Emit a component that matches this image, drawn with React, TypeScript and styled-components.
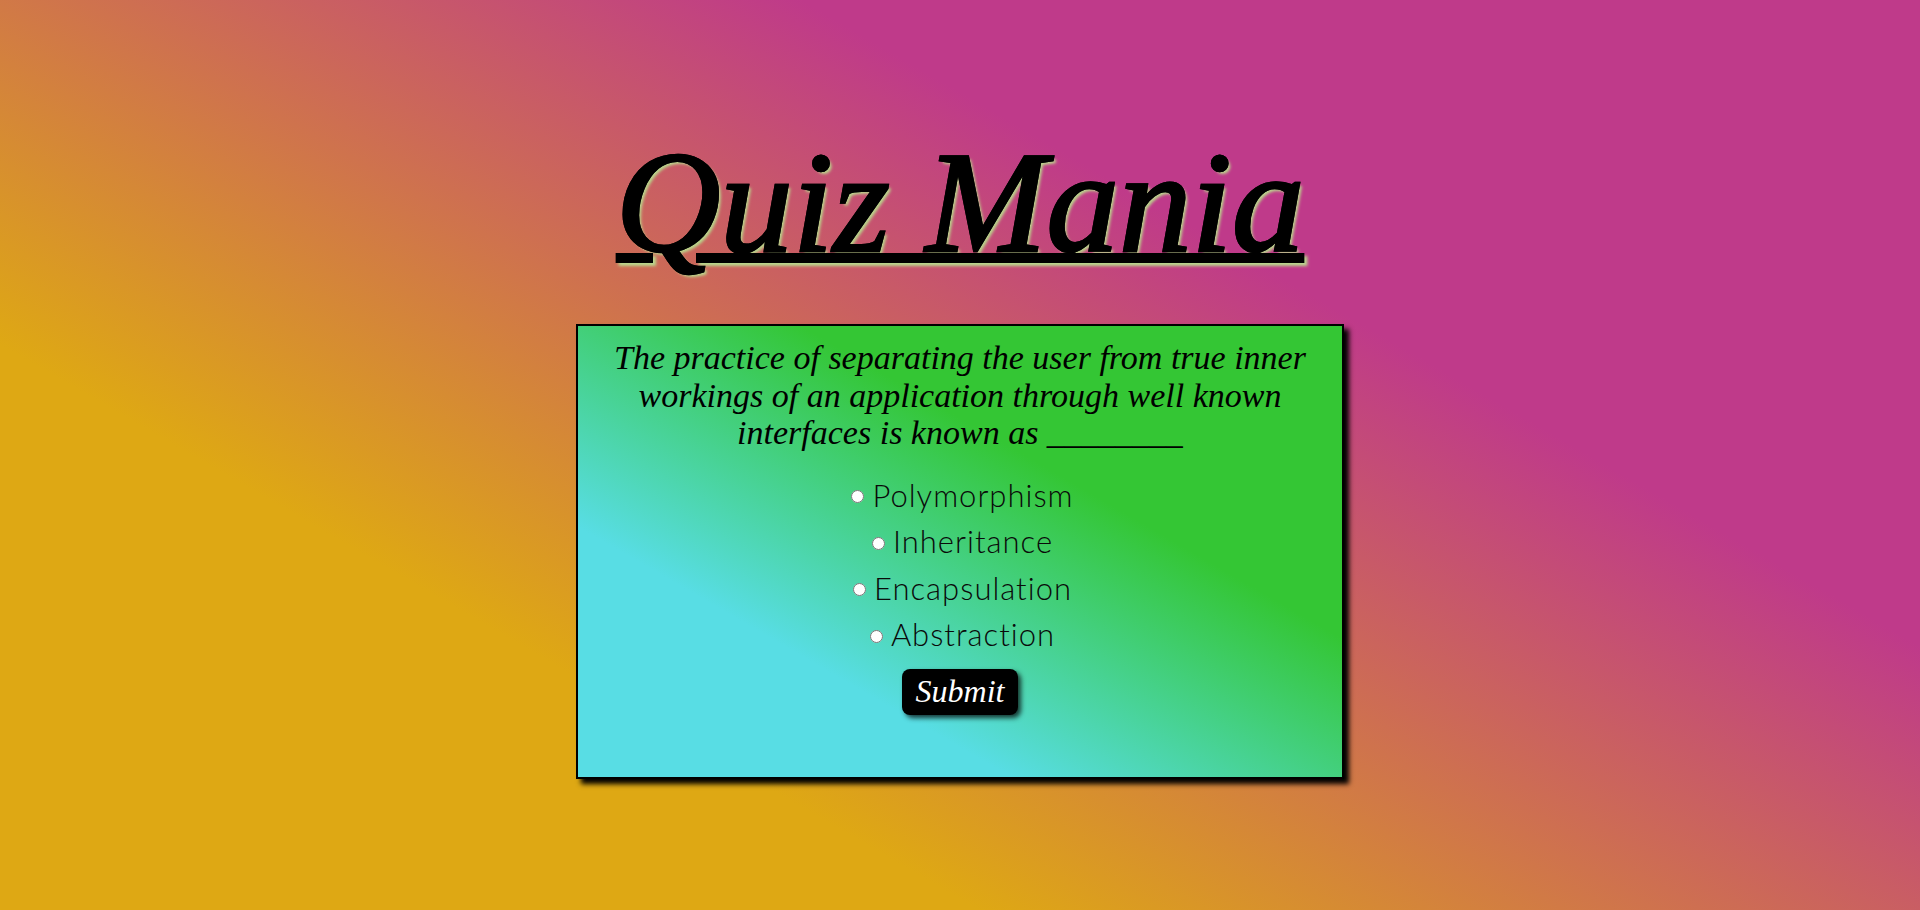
import React from "react";
import styled, { createGlobalStyle } from "styled-components";

const GlobalStyle = createGlobalStyle`
  html, body {
    margin: 0;
    padding: 0;
  }
  body {
    font-family: "Liberation Serif", serif;
  }
`;

const Page = styled.main`
  min-height: 100vh;
  box-sizing: border-box;
  padding-top: 132px;
  display: flex;
  flex-direction: column;
  align-items: center;
  background: linear-gradient(30deg, #dea814 28%, #bf3a8a 68%);
`;

const Title = styled.h1`
  margin: 0;
  font-family: "Liberation Serif", serif;
  font-style: italic;
  font-weight: 400;
  font-size: 145px;
  line-height: 140px;
  color: #000;
  -webkit-text-stroke: 2.5px #000;
  text-decoration: underline;
  text-decoration-thickness: 10px;
  text-underline-offset: 2px;
  text-shadow: 3px 3px 3px rgb(185, 215, 140);
`;

const Card = styled.section`
  margin-top: 52px;
  width: 768px;
  box-sizing: border-box;
  border: 2px solid #000;
  box-shadow: 5px 5px 5px #000;
  background: linear-gradient(30deg, #58dde4 28%, #34c634 65%);
  padding: 13px 16px 62px;
  display: flex;
  flex-direction: column;
  align-items: center;
`;

const Question = styled.h2`
  margin: 0;
  max-width: 736px;
  font-family: "Liberation Serif", serif;
  font-style: italic;
  font-weight: 400;
  font-size: 34px;
  line-height: 37.5px;
  text-align: center;
  color: #000;
`;

const Options = styled.div`
  margin-top: 20px;
  display: flex;
  flex-direction: column;
  align-items: center;
`;

const Option = styled.label`
  display: flex;
  align-items: center;
  justify-content: center;
  font-family: Lato, "Open Sans", sans-serif;
  font-weight: 300;
  font-size: 31px;
  letter-spacing: 1px;
  line-height: 46.5px;
  color: #0a0a0a;
`;

const Radio = styled.input`
  width: 13px;
  height: 13px;
  margin: 4px 8px 0 5px;
`;

const SubmitButton = styled.button`
  margin-top: 11px;
  background: #000;
  color: #fff;
  font-family: "Liberation Serif", serif;
  font-style: italic;
  font-size: 32px;
  line-height: 39px;
  padding: 3px 14px 4px;
  border: none;
  border-radius: 8px;
  box-shadow: 3px 3px 5px rgba(0, 0, 0, 0.75);
  cursor: pointer;
`;

const choices = ["Polymorphism", "Inheritance", "Encapsulation", "Abstraction"];

export default function App() {
  return (
    <>
      <GlobalStyle />
      <Page>
        <Title>Quiz Mania</Title>
        <Card>
          <Question>
            The practice of separating the user from true inner workings of an
            application through well known interfaces is known as ________
          </Question>
          <Options>
            {choices.map((c) => (
              <Option key={c}>
                <Radio type="radio" name="answer" value={c} />
                {c}
              </Option>
            ))}
          </Options>
          <SubmitButton type="button">Submit</SubmitButton>
        </Card>
      </Page>
    </>
  );
}
